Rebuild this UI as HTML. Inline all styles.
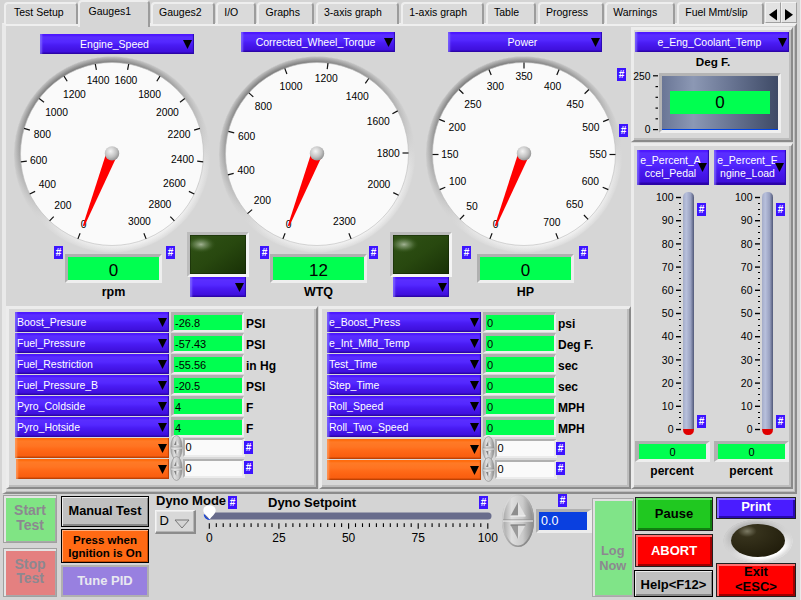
<!DOCTYPE html>
<html><head><meta charset="utf-8"><title>Dyno</title>
<style>
html,body{margin:0;padding:0}
body{width:801px;height:600px;background:#d4d4d4;position:relative;overflow:hidden;font-family:"Liberation Sans",sans-serif;font-size:11px;color:#000}
div,svg.abs{position:absolute;box-sizing:border-box}
.abs{position:absolute}
.tab{background:#dadada;border:2px solid #eeeeee;border-bottom:none;border-right:2px solid #9c9c9c;border-radius:4px 4px 0 0;text-align:left;padding-left:7.5px;font-size:10.5px;white-space:nowrap;overflow:hidden}
.panel{background:#d8d8d8;border-style:solid;border-width:3px 2px 2px 3px;border-color:#ececec #8a8a8a #8a8a8a #ececec;box-shadow:inset -2px -2px 0 #bdbdbd}
.dd{color:#fff;font-size:10.5px;white-space:nowrap;overflow:hidden}
.dd.blue{background:linear-gradient(#4a14ff 0,#4a14ff 1px,#5a2eff 3px,#5428ff 40%,#4a1cf4 55%,#4414e6 75%,#3e10dc 90%,#2a02a8 96%,#2800a0 100%);box-shadow:inset 3px 0 2px -1px rgba(135,115,255,.75), inset -2px 0 1px -1px #2a0ab0}
.dd.orange{background:linear-gradient(#ff6a0a 0,#ff6a0a 1px,#ff7a26 3px,#ff7422 40%,#ff6a18 55%,#fc6212 75%,#f85e10 90%,#c04000 96%,#b43a00 100%);box-shadow:inset 3px 0 2px -1px rgba(255,160,100,.75), inset -2px 0 1px -1px #c04000}
.arr{position:absolute}
.hb{width:9px;height:13px;background:#3c14ff;color:#fff;font-size:10px;line-height:13px;text-align:center;font-weight:bold;overflow:hidden}
.sunk{border-style:solid;border-color:#b0b0b0 #eeeeee #eeeeee #b0b0b0;background:#00ff50;white-space:nowrap}
.lb{white-space:nowrap;line-height:1}
.gl{font-family:"Liberation Sans",sans-serif;font-size:10.3px;fill:#000}
.tl{font-family:"Liberation Sans",sans-serif;font-size:10.5px;fill:#000}
.btn{text-align:center;font-weight:bold;font-size:13px;white-space:nowrap}
</style></head><body>
<svg width="0" height="0" style="position:absolute"><defs>
<linearGradient id="bezel" x1="0.3" y1="0.03" x2="0.7" y2="0.97"><stop offset="0" stop-color="#646464"/><stop offset="0.45" stop-color="#b4b4b4"/><stop offset="0.75" stop-color="#e6e6e6"/><stop offset="1" stop-color="#f6f6f6"/></linearGradient>
<radialGradient id="fade" cx="0.5" cy="0.5" r="0.5"><stop offset="0.925" stop-color="#d6d6d6" stop-opacity="0"/><stop offset="1" stop-color="#d6d6d6" stop-opacity="0.9"/></radialGradient>
<radialGradient id="hub" cx="0.4" cy="0.35" r="0.7"><stop offset="0" stop-color="#f4f4f4"/><stop offset="0.6" stop-color="#c0c0c0"/><stop offset="1" stop-color="#8a8a8a"/></radialGradient>
<linearGradient id="tube" x1="0" y1="0" x2="1" y2="0"><stop offset="0" stop-color="#a4acc8"/><stop offset="0.3" stop-color="#b8c0dc"/><stop offset="0.7" stop-color="#98a0c0"/><stop offset="1" stop-color="#505878"/></linearGradient>
<linearGradient id="spin" x1="0" y1="0" x2="1" y2="0"><stop offset="0" stop-color="#a2a2a2"/><stop offset="0.3" stop-color="#dedede"/><stop offset="0.65" stop-color="#cacaca"/><stop offset="1" stop-color="#868686"/></linearGradient><linearGradient id="spinedge" x1="0" y1="0" x2="1" y2="1"><stop offset="0" stop-color="#e8e8e8"/><stop offset="0.5" stop-color="#b0b0b0"/><stop offset="1" stop-color="#7a7a7a"/></linearGradient>
<radialGradient id="led" cx="0.3" cy="0.22" r="0.8"><stop offset="0" stop-color="#7c7a64"/><stop offset="0.22" stop-color="#36321c"/><stop offset="1" stop-color="#221e0c"/></radialGradient><linearGradient id="ledring" x1="0.2" y1="0" x2="0.8" y2="1"><stop offset="0" stop-color="#a4a4a4"/><stop offset="0.5" stop-color="#d0d0d0"/><stop offset="0.8" stop-color="#ffffff"/><stop offset="1" stop-color="#ffffff"/></linearGradient><radialGradient id="ledfade" cx="0.5" cy="0.5" r="0.5"><stop offset="0.8" stop-color="#d4d4d4" stop-opacity="0"/><stop offset="1" stop-color="#d4d4d4" stop-opacity="0.95"/></radialGradient>
<linearGradient id="sqled" x1="0" y1="0" x2="1" y2="1"><stop offset="0" stop-color="#305216"/><stop offset="0.5" stop-color="#28480f"/><stop offset="1" stop-color="#183006"/></linearGradient><radialGradient id="sqhl" cx="0.5" cy="0.5" r="0.5"><stop offset="0" stop-color="#c0ccb4" stop-opacity="0.8"/><stop offset="0.5" stop-color="#90a880" stop-opacity="0.4"/><stop offset="1" stop-color="#305216" stop-opacity="0"/></radialGradient>
</defs></svg>

<div style="left:2px;top:23px;width:795px;height:470.5px;background:#d6d6d6;border-style:solid;border-width:3px 2px 2px 4px;border-color:#efefef #8c8c8c #8c8c8c #e9e9e9;box-shadow:inset -1px -1px 0 #bcbcbc"></div><div style="left:800px;top:0;width:1px;height:600px;background:#eaeaea"></div>
<div class="tab" style="left:4px;top:2px;width:73.5px;height:22px;line-height:17.6px;padding-left:8px">Test Setup</div>
<div class="tab" style="left:78px;top:0;width:71.5px;height:27px;line-height:18.4px;background:#d6d6d6;padding-left:8.5px">Gauges1</div>
<div class="tab" style="left:150.5px;top:2px;width:64.0px;height:22px;line-height:17.6px;padding-left:6.5px">Gauges2</div>
<div class="tab" style="left:215.75px;top:2px;width:39.75px;height:22px;line-height:17.6px;padding-left:6.5px">I/O</div>
<div class="tab" style="left:257px;top:2px;width:57px;height:22px;line-height:17.6px;padding-left:6.5px">Graphs</div>
<div class="tab" style="left:315.5px;top:2px;width:83.75px;height:22px;line-height:17.6px;padding-left:6.5px">3-axis graph</div>
<div class="tab" style="left:400.75px;top:2px;width:83.5px;height:22px;line-height:17.6px;padding-left:6.5px">1-axis graph</div>
<div class="tab" style="left:485.5px;top:2px;width:50.75px;height:22px;line-height:17.6px;padding-left:6.5px">Table</div>
<div class="tab" style="left:537.5px;top:2px;width:66.75px;height:22px;line-height:17.6px;padding-left:6.5px">Progress</div>
<div class="tab" style="left:604.75px;top:2px;width:70.5px;height:22px;line-height:17.6px;padding-left:6.5px">Warnings</div>
<div class="tab" style="left:676.75px;top:2px;width:86.75px;height:22px;line-height:17.6px;padding-left:6.5px">Fuel Mmt/slip</div>
<div style="left:765px;top:2px;width:16px;height:21px;background:#e2e2e2;border:1px solid;border-color:#f2f2f2 #a0a0a0 #a0a0a0 #f2f2f2"><svg class="abs" style="left:3px;top:6px" width="8" height="12"><path d="M8 0V11.5L0 5.7Z"/></svg></div>
<div style="left:781px;top:2px;width:16px;height:21px;background:#e2e2e2;border:1px solid;border-color:#f2f2f2 #a0a0a0 #a0a0a0 #f2f2f2"><svg class="abs" style="left:3px;top:6px" width="8" height="12"><path d="M0 0V11.5L8 5.7Z"/></svg></div>
<div class="dd blue" style="left:40px;top:34px;width:154px;height:20px;text-align:center;padding-right:5px;line-height:20.5px;">Engine_Speed<svg class="arr" style="left:143px;top:6.0px" width="9" height="9" viewBox="0 0 9 9"><path d="M0 0H9L4.5 9Z" fill="#000"/></svg></div>
<div class="dd blue" style="left:241px;top:32px;width:154px;height:20px;text-align:center;padding-right:5px;line-height:20.5px;">Corrected_Wheel_Torque<svg class="arr" style="left:143px;top:6.0px" width="9" height="9" viewBox="0 0 9 9"><path d="M0 0H9L4.5 9Z" fill="#000"/></svg></div>
<div class="dd blue" style="left:448px;top:32px;width:154px;height:20px;text-align:center;padding-right:5px;line-height:20.5px;">Power<svg class="arr" style="left:143px;top:6.0px" width="9" height="9" viewBox="0 0 9 9"><path d="M0 0H9L4.5 9Z" fill="#000"/></svg></div>
<svg class="abs" style="left:12px;top:53.900000000000006px" width="200" height="200" viewBox="12 53.900000000000006 200 200"><circle cx="112" cy="154.4" r="98" fill="url(#bezel)"/><circle cx="112" cy="154.4" r="98.5" fill="url(#fade)"/><circle cx="112" cy="153.9" r="91.5" fill="#fafafa" stroke="#bebebe" stroke-opacity="0.7" stroke-width="0.9"/><line x1="77.9" y1="238.8" x2="80.1" y2="233.2" stroke="#111" stroke-width="1.2"/><text x="83.6" y="227.7" text-anchor="middle" class="gl">0</text><line x1="49.6" y1="220.8" x2="53.7" y2="216.5" stroke="#111" stroke-width="1.2"/><text x="62.8" y="209.4" text-anchor="middle" class="gl">200</text><line x1="29.7" y1="193.9" x2="35.1" y2="191.3" stroke="#111" stroke-width="1.2"/><text x="47.3" y="188.4" text-anchor="middle" class="gl">400</text><line x1="20.8" y1="161.7" x2="26.8" y2="161.1" stroke="#111" stroke-width="1.2"/><text x="38.7" y="163.6" text-anchor="middle" class="gl">600</text><line x1="24.1" y1="128.3" x2="29.9" y2="130.0" stroke="#111" stroke-width="1.2"/><text x="42.3" y="137.6" text-anchor="middle" class="gl">800</text><line x1="39.2" y1="98.5" x2="44.0" y2="102.1" stroke="#111" stroke-width="1.2"/><text x="56.6" y="116.1" text-anchor="middle" class="gl">1000</text><line x1="64.0" y1="76.0" x2="67.2" y2="81.1" stroke="#111" stroke-width="1.2"/><text x="74.4" y="97.5" text-anchor="middle" class="gl">1200</text><line x1="95.3" y1="63.9" x2="96.4" y2="69.8" stroke="#111" stroke-width="1.2"/><text x="98.1" y="83.9" text-anchor="middle" class="gl">1400</text><line x1="128.7" y1="63.9" x2="127.6" y2="69.8" stroke="#111" stroke-width="1.2"/><text x="125.9" y="83.9" text-anchor="middle" class="gl">1600</text><line x1="160.0" y1="76.0" x2="156.8" y2="81.1" stroke="#111" stroke-width="1.2"/><text x="149.6" y="97.5" text-anchor="middle" class="gl">1800</text><line x1="184.8" y1="98.5" x2="180.0" y2="102.1" stroke="#111" stroke-width="1.2"/><text x="167.4" y="116.1" text-anchor="middle" class="gl">2000</text><line x1="199.9" y1="128.3" x2="194.1" y2="130.0" stroke="#111" stroke-width="1.2"/><text x="179.0" y="138.4" text-anchor="middle" class="gl">2200</text><line x1="203.2" y1="161.7" x2="197.2" y2="161.1" stroke="#111" stroke-width="1.2"/><text x="182.5" y="163.4" text-anchor="middle" class="gl">2400</text><line x1="194.3" y1="193.9" x2="188.9" y2="191.3" stroke="#111" stroke-width="1.2"/><text x="174.4" y="187.3" text-anchor="middle" class="gl">2600</text><line x1="174.4" y1="220.8" x2="170.3" y2="216.5" stroke="#111" stroke-width="1.2"/><text x="159.9" y="208.0" text-anchor="middle" class="gl">2800</text><line x1="146.1" y1="238.8" x2="143.9" y2="233.2" stroke="#111" stroke-width="1.2"/><text x="139.4" y="224.6" text-anchor="middle" class="gl">3000</text><polygon points="106.8,151.3 82.8,225.6 84.3,226.2 117.2,155.3" fill="#ff0000"/><circle cx="112" cy="153.3" r="7.2" fill="url(#hub)"/></svg>
<svg class="abs" style="left:217px;top:53.900000000000006px" width="200" height="200" viewBox="217 53.900000000000006 200 200"><circle cx="317" cy="154.4" r="98" fill="url(#bezel)"/><circle cx="317" cy="154.4" r="98.5" fill="url(#fade)"/><circle cx="317" cy="153.9" r="91.5" fill="#fafafa" stroke="#bebebe" stroke-opacity="0.7" stroke-width="0.9"/><line x1="282.9" y1="238.8" x2="285.1" y2="233.2" stroke="#111" stroke-width="1.2"/><text x="288.6" y="227.7" text-anchor="middle" class="gl">0</text><line x1="247.5" y1="213.5" x2="252.1" y2="209.5" stroke="#111" stroke-width="1.2"/><text x="262.4" y="203.5" text-anchor="middle" class="gl">200</text><line x1="227.9" y1="174.7" x2="233.7" y2="173.3" stroke="#111" stroke-width="1.2"/><text x="246.1" y="173.7" text-anchor="middle" class="gl">400</text><line x1="228.4" y1="131.2" x2="234.2" y2="132.7" stroke="#111" stroke-width="1.2"/><text x="246.6" y="139.8" text-anchor="middle" class="gl">600</text><line x1="248.9" y1="92.8" x2="253.3" y2="96.8" stroke="#111" stroke-width="1.2"/><text x="263.4" y="110.3" text-anchor="middle" class="gl">800</text><line x1="284.8" y1="68.3" x2="286.9" y2="73.9" stroke="#111" stroke-width="1.2"/><text x="291.0" y="89.6" text-anchor="middle" class="gl">1000</text><line x1="328.0" y1="63.1" x2="327.2" y2="69.0" stroke="#111" stroke-width="1.2"/><text x="326.2" y="82.3" text-anchor="middle" class="gl">1200</text><line x1="368.7" y1="78.4" x2="365.3" y2="83.3" stroke="#111" stroke-width="1.2"/><text x="357.3" y="99.7" text-anchor="middle" class="gl">1400</text><line x1="397.7" y1="110.8" x2="392.4" y2="113.6" stroke="#111" stroke-width="1.2"/><text x="378.2" y="125.4" text-anchor="middle" class="gl">1600</text><line x1="408.5" y1="152.9" x2="402.5" y2="152.9" stroke="#111" stroke-width="1.2"/><text x="388.2" y="156.7" text-anchor="middle" class="gl">1800</text><line x1="398.6" y1="195.2" x2="393.3" y2="192.5" stroke="#111" stroke-width="1.2"/><text x="378.9" y="188.3" text-anchor="middle" class="gl">2000</text><line x1="351.1" y1="238.8" x2="348.9" y2="233.2" stroke="#111" stroke-width="1.2"/><text x="344.4" y="224.6" text-anchor="middle" class="gl">2300</text><polygon points="311.8,151.3 287.8,225.6 289.3,226.2 322.2,155.3" fill="#ff0000"/><circle cx="317" cy="153.3" r="7.2" fill="url(#hub)"/></svg>
<svg class="abs" style="left:424px;top:53.900000000000006px" width="200" height="200" viewBox="424 53.900000000000006 200 200"><circle cx="524" cy="154.4" r="98" fill="url(#bezel)"/><circle cx="524" cy="154.4" r="98.5" fill="url(#fade)"/><circle cx="524" cy="153.9" r="91.5" fill="#fafafa" stroke="#bebebe" stroke-opacity="0.7" stroke-width="0.9"/><line x1="489.9" y1="238.8" x2="492.1" y2="233.2" stroke="#111" stroke-width="1.2"/><text x="495.6" y="227.7" text-anchor="middle" class="gl">0</text><line x1="459.9" y1="219.2" x2="464.1" y2="214.9" stroke="#111" stroke-width="1.2"/><text x="472.0" y="209.5" text-anchor="middle" class="gl">50</text><line x1="439.7" y1="189.5" x2="445.3" y2="187.2" stroke="#111" stroke-width="1.2"/><text x="457.6" y="185.1" text-anchor="middle" class="gl">100</text><line x1="432.5" y1="154.4" x2="438.5" y2="154.4" stroke="#111" stroke-width="1.2"/><text x="449.9" y="157.9" text-anchor="middle" class="gl">150</text><line x1="439.3" y1="119.3" x2="444.9" y2="121.5" stroke="#111" stroke-width="1.2"/><text x="457.2" y="130.7" text-anchor="middle" class="gl">200</text><line x1="459.1" y1="89.4" x2="463.4" y2="93.6" stroke="#111" stroke-width="1.2"/><text x="472.9" y="107.6" text-anchor="middle" class="gl">250</text><line x1="488.9" y1="69.4" x2="491.2" y2="75.0" stroke="#111" stroke-width="1.2"/><text x="495.4" y="89.9" text-anchor="middle" class="gl">300</text><line x1="524.0" y1="62.4" x2="524.0" y2="68.4" stroke="#111" stroke-width="1.2"/><text x="524.0" y="80.0" text-anchor="middle" class="gl">350</text><line x1="559.1" y1="69.4" x2="556.8" y2="75.0" stroke="#111" stroke-width="1.2"/><text x="552.6" y="89.9" text-anchor="middle" class="gl">400</text><line x1="588.9" y1="89.4" x2="584.6" y2="93.6" stroke="#111" stroke-width="1.2"/><text x="575.1" y="107.6" text-anchor="middle" class="gl">450</text><line x1="608.7" y1="119.3" x2="603.1" y2="121.5" stroke="#111" stroke-width="1.2"/><text x="590.8" y="130.7" text-anchor="middle" class="gl">500</text><line x1="615.5" y1="154.4" x2="609.5" y2="154.4" stroke="#111" stroke-width="1.2"/><text x="598.1" y="157.9" text-anchor="middle" class="gl">550</text><line x1="608.3" y1="189.5" x2="602.7" y2="187.2" stroke="#111" stroke-width="1.2"/><text x="590.4" y="185.1" text-anchor="middle" class="gl">600</text><line x1="588.1" y1="219.2" x2="583.9" y2="214.9" stroke="#111" stroke-width="1.2"/><text x="574.6" y="208.0" text-anchor="middle" class="gl">650</text><line x1="558.1" y1="238.8" x2="555.9" y2="233.2" stroke="#111" stroke-width="1.2"/><text x="551.8" y="225.6" text-anchor="middle" class="gl">700</text><polygon points="518.8,151.3 494.8,225.6 496.3,226.2 529.2,155.3" fill="#ff0000"/><circle cx="524" cy="153.3" r="7.2" fill="url(#hub)"/></svg>
<div class="hb" style="left:54px;top:246px">#</div>
<div class="hb" style="left:166px;top:246px">#</div>
<div class="sunk" style="left:65px;top:254px;width:97px;height:29px;border-width:3px 3px 3px 3px;font-size:17px;line-height:23px;text-align:center;padding-top:1.5px;">0</div>
<div class="lb" style="left:73.5px;top:286.3px;font-size:12.5px;color:#000;font-weight:bold;width:80px;text-align:center;">rpm</div>
<div class="hb" style="left:260px;top:246px">#</div>
<div class="hb" style="left:369px;top:246px">#</div>
<div class="sunk" style="left:270px;top:254px;width:97px;height:29px;border-width:3px 3px 3px 3px;font-size:17px;line-height:23px;text-align:center;padding-top:1.5px;">12</div>
<div class="lb" style="left:278.5px;top:286.3px;font-size:12.5px;color:#000;font-weight:bold;width:80px;text-align:center;">WTQ</div>
<div class="hb" style="left:462px;top:246px">#</div>
<div class="hb" style="left:579px;top:246px">#</div>
<div class="sunk" style="left:477px;top:254px;width:97px;height:29px;border-width:3px 3px 3px 3px;font-size:17px;line-height:23px;text-align:center;padding-top:1.5px;">0</div>
<div class="lb" style="left:485.5px;top:286.3px;font-size:12.5px;color:#000;font-weight:bold;width:80px;text-align:center;">HP</div>
<div style="left:187px;top:232px;width:62px;height:45px;border-style:solid;border-width:3px 3px 3px 3px;border-color:#bcbcbc #f4f4f4 #f4f4f4 #bcbcbc"><svg class="abs" style="left:0;top:0" width="56" height="39" viewBox="0 0 56 39"><rect width="56" height="39" fill="url(#sqled)"/><rect width="56" height="39" fill="none" stroke="#0c1c04" stroke-opacity="0.55" stroke-width="1.5"/><ellipse cx="11" cy="9.5" rx="15" ry="8.5" fill="url(#sqhl)"/></svg></div>
<div class="dd blue" style="left:190px;top:277px;width:56px;height:20px;text-align:center;padding-right:5px;line-height:20.5px;"><svg class="arr" style="left:45px;top:6.0px" width="9" height="9" viewBox="0 0 9 9"><path d="M0 0H9L4.5 9Z" fill="#000"/></svg></div>
<div style="left:390px;top:232px;width:62px;height:45px;border-style:solid;border-width:3px 3px 3px 3px;border-color:#bcbcbc #f4f4f4 #f4f4f4 #bcbcbc"><svg class="abs" style="left:0;top:0" width="56" height="39" viewBox="0 0 56 39"><rect width="56" height="39" fill="url(#sqled)"/><rect width="56" height="39" fill="none" stroke="#0c1c04" stroke-opacity="0.55" stroke-width="1.5"/><ellipse cx="11" cy="9.5" rx="15" ry="8.5" fill="url(#sqhl)"/></svg></div>
<div class="dd blue" style="left:393px;top:277px;width:56px;height:20px;text-align:center;padding-right:5px;line-height:20.5px;"><svg class="arr" style="left:45px;top:6.0px" width="9" height="9" viewBox="0 0 9 9"><path d="M0 0H9L4.5 9Z" fill="#000"/></svg></div>
<div class="panel" style="left:6px;top:306px;width:312px;height:183px"></div>
<div class="dd blue" style="left:15px;top:312px;width:154px;height:20px;text-align:left;padding-left:2px;line-height:20.5px;">Boost_Presure<svg class="arr" style="left:143px;top:6.0px" width="9" height="9" viewBox="0 0 9 9"><path d="M0 0H9L4.5 9Z" fill="#000"/></svg></div>
<div class="sunk" style="left:171px;top:312px;width:73px;height:20px;border-width:3px 2px 2px 3px;font-size:11px;line-height:15px;text-align:left;padding-left:1px;padding-top:0.8px;">-26.8</div>
<div class="lb" style="left:246px;top:318px;font-size:12px;color:#000;font-weight:bold;">PSI</div>
<div class="dd blue" style="left:15px;top:333px;width:154px;height:20px;text-align:left;padding-left:2px;line-height:20.5px;">Fuel_Pressure<svg class="arr" style="left:143px;top:6.0px" width="9" height="9" viewBox="0 0 9 9"><path d="M0 0H9L4.5 9Z" fill="#000"/></svg></div>
<div class="sunk" style="left:171px;top:333px;width:73px;height:20px;border-width:3px 2px 2px 3px;font-size:11px;line-height:15px;text-align:left;padding-left:1px;padding-top:0.8px;">-57.43</div>
<div class="lb" style="left:246px;top:339px;font-size:12px;color:#000;font-weight:bold;">PSI</div>
<div class="dd blue" style="left:15px;top:354px;width:154px;height:20px;text-align:left;padding-left:2px;line-height:20.5px;">Fuel_Restriction<svg class="arr" style="left:143px;top:6.0px" width="9" height="9" viewBox="0 0 9 9"><path d="M0 0H9L4.5 9Z" fill="#000"/></svg></div>
<div class="sunk" style="left:171px;top:354px;width:73px;height:20px;border-width:3px 2px 2px 3px;font-size:11px;line-height:15px;text-align:left;padding-left:1px;padding-top:0.8px;">-55.56</div>
<div class="lb" style="left:246px;top:360px;font-size:12px;color:#000;font-weight:bold;">in Hg</div>
<div class="dd blue" style="left:15px;top:375px;width:154px;height:20px;text-align:left;padding-left:2px;line-height:20.5px;">Fuel_Pressure_B<svg class="arr" style="left:143px;top:6.0px" width="9" height="9" viewBox="0 0 9 9"><path d="M0 0H9L4.5 9Z" fill="#000"/></svg></div>
<div class="sunk" style="left:171px;top:375px;width:73px;height:20px;border-width:3px 2px 2px 3px;font-size:11px;line-height:15px;text-align:left;padding-left:1px;padding-top:0.8px;">-20.5</div>
<div class="lb" style="left:246px;top:381px;font-size:12px;color:#000;font-weight:bold;">PSI</div>
<div class="dd blue" style="left:15px;top:396px;width:154px;height:20px;text-align:left;padding-left:2px;line-height:20.5px;">Pyro_Coldside<svg class="arr" style="left:143px;top:6.0px" width="9" height="9" viewBox="0 0 9 9"><path d="M0 0H9L4.5 9Z" fill="#000"/></svg></div>
<div class="sunk" style="left:171px;top:396px;width:73px;height:20px;border-width:3px 2px 2px 3px;font-size:11px;line-height:15px;text-align:left;padding-left:1px;padding-top:0.8px;">4</div>
<div class="lb" style="left:246px;top:402px;font-size:12px;color:#000;font-weight:bold;">F</div>
<div class="dd blue" style="left:15px;top:417px;width:154px;height:20px;text-align:left;padding-left:2px;line-height:20.5px;">Pyro_Hotside<svg class="arr" style="left:143px;top:6.0px" width="9" height="9" viewBox="0 0 9 9"><path d="M0 0H9L4.5 9Z" fill="#000"/></svg></div>
<div class="sunk" style="left:171px;top:417px;width:73px;height:20px;border-width:3px 2px 2px 3px;font-size:11px;line-height:15px;text-align:left;padding-left:1px;padding-top:0.8px;">4</div>
<div class="lb" style="left:246px;top:423px;font-size:12px;color:#000;font-weight:bold;">F</div>
<div class="dd orange" style="left:15px;top:438px;width:154px;height:20px;text-align:center;padding-right:5px;line-height:20.5px;"><svg class="arr" style="left:143px;top:6.0px" width="9" height="9" viewBox="0 0 9 9"><path d="M0 0H9L4.5 9Z" fill="#000"/></svg></div>
<svg class="abs" style="left:170px;top:435px" width="13" height="25" viewBox="0 0 13 25"><ellipse cx="6.5" cy="12.5" rx="5.7" ry="12" fill="url(#spin)" stroke="#9c9c9c" stroke-width="0.8"/><line x1="1" y1="12.2" x2="12" y2="12.2" stroke="#8a8a8a" stroke-width="0.8"/><line x1="1" y1="13" x2="12" y2="13" stroke="#f0f0f0" stroke-width="0.8"/><path d="M6.5 4.5L4 10H6.5Z M6.5 20.5L4 15H6.5Z" fill="#808080"/><path d="M6.5 4.5L9 10H6.5Z M6.5 20.5L9 15H6.5Z" fill="#e4e4e4"/></svg>
<div style="left:182.5px;top:438px;width:62px;height:19px;background:#fafafa;border-style:solid;border-width:2px 3.5px 2.3px 2.3px;border-color:#b0b0b0 #ececec #ececec #b0b0b0;line-height:15px;padding-left:1px;font-size:11px">0</div>
<div class="hb" style="left:244px;top:441px">#</div>
<div class="dd orange" style="left:16px;top:459px;width:153px;height:20px;text-align:center;padding-right:5px;line-height:20.5px;"><svg class="arr" style="left:142px;top:6.0px" width="9" height="9" viewBox="0 0 9 9"><path d="M0 0H9L4.5 9Z" fill="#000"/></svg></div>
<svg class="abs" style="left:170px;top:456px" width="13" height="25" viewBox="0 0 13 25"><ellipse cx="6.5" cy="12.5" rx="5.7" ry="12" fill="url(#spin)" stroke="#9c9c9c" stroke-width="0.8"/><line x1="1" y1="12.2" x2="12" y2="12.2" stroke="#8a8a8a" stroke-width="0.8"/><line x1="1" y1="13" x2="12" y2="13" stroke="#f0f0f0" stroke-width="0.8"/><path d="M6.5 4.5L4 10H6.5Z M6.5 20.5L4 15H6.5Z" fill="#808080"/><path d="M6.5 4.5L9 10H6.5Z M6.5 20.5L9 15H6.5Z" fill="#e4e4e4"/></svg>
<div style="left:182.5px;top:459px;width:62px;height:19px;background:#fafafa;border-style:solid;border-width:2px 3.5px 2.3px 2.3px;border-color:#b0b0b0 #ececec #ececec #b0b0b0;line-height:15px;padding-left:1px;font-size:11px">0</div>
<div class="hb" style="left:244px;top:461px">#</div>
<div class="panel" style="left:319px;top:306px;width:312px;height:183px"></div>
<div class="dd blue" style="left:327px;top:312px;width:154px;height:20px;text-align:left;padding-left:2px;line-height:20.5px;">e_Boost_Press<svg class="arr" style="left:143px;top:6.0px" width="9" height="9" viewBox="0 0 9 9"><path d="M0 0H9L4.5 9Z" fill="#000"/></svg></div>
<div class="sunk" style="left:483px;top:312px;width:73px;height:20px;border-width:3px 2px 2px 3px;font-size:11px;line-height:15px;text-align:left;padding-left:1px;padding-top:0.8px;">0</div>
<div class="lb" style="left:558px;top:318px;font-size:12px;color:#000;font-weight:bold;">psi</div>
<div class="dd blue" style="left:327px;top:333px;width:154px;height:20px;text-align:left;padding-left:2px;line-height:20.5px;">e_Int_Mfld_Temp<svg class="arr" style="left:143px;top:6.0px" width="9" height="9" viewBox="0 0 9 9"><path d="M0 0H9L4.5 9Z" fill="#000"/></svg></div>
<div class="sunk" style="left:483px;top:333px;width:73px;height:20px;border-width:3px 2px 2px 3px;font-size:11px;line-height:15px;text-align:left;padding-left:1px;padding-top:0.8px;">0</div>
<div class="lb" style="left:558px;top:339px;font-size:12px;color:#000;font-weight:bold;">Deg F.</div>
<div class="dd blue" style="left:327px;top:354px;width:154px;height:20px;text-align:left;padding-left:2px;line-height:20.5px;">Test_Time<svg class="arr" style="left:143px;top:6.0px" width="9" height="9" viewBox="0 0 9 9"><path d="M0 0H9L4.5 9Z" fill="#000"/></svg></div>
<div class="sunk" style="left:483px;top:354px;width:73px;height:20px;border-width:3px 2px 2px 3px;font-size:11px;line-height:15px;text-align:left;padding-left:1px;padding-top:0.8px;">0</div>
<div class="lb" style="left:558px;top:360px;font-size:12px;color:#000;font-weight:bold;">sec</div>
<div class="dd blue" style="left:327px;top:375px;width:154px;height:20px;text-align:left;padding-left:2px;line-height:20.5px;">Step_Time<svg class="arr" style="left:143px;top:6.0px" width="9" height="9" viewBox="0 0 9 9"><path d="M0 0H9L4.5 9Z" fill="#000"/></svg></div>
<div class="sunk" style="left:483px;top:375px;width:73px;height:20px;border-width:3px 2px 2px 3px;font-size:11px;line-height:15px;text-align:left;padding-left:1px;padding-top:0.8px;">0</div>
<div class="lb" style="left:558px;top:381px;font-size:12px;color:#000;font-weight:bold;">sec</div>
<div class="dd blue" style="left:327px;top:396px;width:154px;height:20px;text-align:left;padding-left:2px;line-height:20.5px;">Roll_Speed<svg class="arr" style="left:143px;top:6.0px" width="9" height="9" viewBox="0 0 9 9"><path d="M0 0H9L4.5 9Z" fill="#000"/></svg></div>
<div class="sunk" style="left:483px;top:396px;width:73px;height:20px;border-width:3px 2px 2px 3px;font-size:11px;line-height:15px;text-align:left;padding-left:1px;padding-top:0.8px;">0</div>
<div class="lb" style="left:558px;top:402px;font-size:12px;color:#000;font-weight:bold;">MPH</div>
<div class="dd blue" style="left:327px;top:417px;width:154px;height:20px;text-align:left;padding-left:2px;line-height:20.5px;">Roll_Two_Speed<svg class="arr" style="left:143px;top:6.0px" width="9" height="9" viewBox="0 0 9 9"><path d="M0 0H9L4.5 9Z" fill="#000"/></svg></div>
<div class="sunk" style="left:483px;top:417px;width:73px;height:20px;border-width:3px 2px 2px 3px;font-size:11px;line-height:15px;text-align:left;padding-left:1px;padding-top:0.8px;">0</div>
<div class="lb" style="left:558px;top:423px;font-size:12px;color:#000;font-weight:bold;">MPH</div>
<div class="dd orange" style="left:327px;top:439px;width:154px;height:20px;text-align:center;padding-right:5px;line-height:20.5px;"><svg class="arr" style="left:143px;top:6.0px" width="9" height="9" viewBox="0 0 9 9"><path d="M0 0H9L4.5 9Z" fill="#000"/></svg></div>
<svg class="abs" style="left:482px;top:436px" width="13" height="25" viewBox="0 0 13 25"><ellipse cx="6.5" cy="12.5" rx="5.7" ry="12" fill="url(#spin)" stroke="#9c9c9c" stroke-width="0.8"/><line x1="1" y1="12.2" x2="12" y2="12.2" stroke="#8a8a8a" stroke-width="0.8"/><line x1="1" y1="13" x2="12" y2="13" stroke="#f0f0f0" stroke-width="0.8"/><path d="M6.5 4.5L4 10H6.5Z M6.5 20.5L4 15H6.5Z" fill="#808080"/><path d="M6.5 4.5L9 10H6.5Z M6.5 20.5L9 15H6.5Z" fill="#e4e4e4"/></svg>
<div style="left:494.5px;top:439px;width:62px;height:19px;background:#fafafa;border-style:solid;border-width:2px 3.5px 2.3px 2.3px;border-color:#b0b0b0 #ececec #ececec #b0b0b0;line-height:15px;padding-left:1px;font-size:11px">0</div>
<div class="hb" style="left:556px;top:442px">#</div>
<div class="dd orange" style="left:327px;top:460px;width:154px;height:20px;text-align:center;padding-right:5px;line-height:20.5px;"><svg class="arr" style="left:143px;top:6.0px" width="9" height="9" viewBox="0 0 9 9"><path d="M0 0H9L4.5 9Z" fill="#000"/></svg></div>
<svg class="abs" style="left:482px;top:457px" width="13" height="25" viewBox="0 0 13 25"><ellipse cx="6.5" cy="12.5" rx="5.7" ry="12" fill="url(#spin)" stroke="#9c9c9c" stroke-width="0.8"/><line x1="1" y1="12.2" x2="12" y2="12.2" stroke="#8a8a8a" stroke-width="0.8"/><line x1="1" y1="13" x2="12" y2="13" stroke="#f0f0f0" stroke-width="0.8"/><path d="M6.5 4.5L4 10H6.5Z M6.5 20.5L4 15H6.5Z" fill="#808080"/><path d="M6.5 4.5L9 10H6.5Z M6.5 20.5L9 15H6.5Z" fill="#e4e4e4"/></svg>
<div style="left:494.5px;top:460px;width:62px;height:19px;background:#fafafa;border-style:solid;border-width:2px 3.5px 2.3px 2.3px;border-color:#b0b0b0 #ececec #ececec #b0b0b0;line-height:15px;padding-left:1px;font-size:11px">0</div>
<div class="hb" style="left:556px;top:462px">#</div>
<div class="panel" style="left:631px;top:27px;width:162px;height:115px"></div>
<div class="dd blue" style="left:635px;top:32px;width:154px;height:20px;text-align:center;padding-right:5px;line-height:20.5px;">e_Eng_Coolant_Temp<svg class="arr" style="left:143px;top:6.0px" width="9" height="9" viewBox="0 0 9 9"><path d="M0 0H9L4.5 9Z" fill="#000"/></svg></div>
<div class="lb" style="left:663px;top:56px;font-size:11.7px;color:#000;font-weight:bold;width:100px;text-align:center;">Deg F.</div>
<div class="hb" style="left:617px;top:68px">#</div>
<div class="hb" style="left:619px;top:124px">#</div>
<div style="left:659px;top:73px;width:122px;height:60px;border-style:solid;border-width:3px;border-color:#b4b4b4 #f0f0f0 #f0f0f0 #b4b4b4;background:linear-gradient(90deg,#6a7696 0,#8c98b4 27%,#687492 60%,#3e4a66 100%)"><div style="left:0;bottom:0;width:100%;height:1px;background:#0040e0"></div></div>
<div style="left:670px;top:91px;width:100px;height:23px;background:#00ff50;text-align:center;font-size:17px;line-height:23px">0</div>
<svg class="abs" style="left:630px;top:68px" width="30" height="70" viewBox="630 68 30 70"><line x1="653" y1="75.8" x2="658" y2="75.8" stroke="#000" stroke-width="1.2"/><line x1="655.5" y1="86.6" x2="658" y2="86.6" stroke="#000" stroke-width="1.2"/><line x1="655.5" y1="97.3" x2="658" y2="97.3" stroke="#000" stroke-width="1.2"/><line x1="655.5" y1="108.1" x2="658" y2="108.1" stroke="#000" stroke-width="1.2"/><line x1="655.5" y1="118.8" x2="658" y2="118.8" stroke="#000" stroke-width="1.2"/><line x1="653" y1="129.6" x2="658" y2="129.6" stroke="#000" stroke-width="1.2"/><text x="650.5" y="80" text-anchor="end" class="gl">250</text><text x="650.5" y="133" text-anchor="end" class="gl">0</text></svg>
<div class="panel" style="left:631px;top:143px;width:162px;height:346px"></div>
<div class="dd blue" style="left:637px;top:150px;width:72px;height:35px;text-align:center;padding-right:5px;line-height:13px;padding-top:4px;padding-right:5px;">e_Percent_A<br>ccel_Pedal<svg class="arr" style="left:61px;top:13px" width="9" height="9" viewBox="0 0 9 9"><path d="M0 0H9L4.5 9Z" fill="#000"/></svg></div>
<div class="dd blue" style="left:714px;top:150px;width:72px;height:35px;text-align:center;padding-right:5px;line-height:13px;padding-top:4px;padding-right:5px;">e_Percent_E<br>ngine_Load<svg class="arr" style="left:61px;top:13px" width="9" height="9" viewBox="0 0 9 9"><path d="M0 0H9L4.5 9Z" fill="#000"/></svg></div>
<svg class="abs" style="left:638px;top:186px" width="60" height="255" viewBox="638 186 60 255"><path d="M683 197.5 Q683 192 688.5 192 Q694 192 694 197.5 V430 H683Z" fill="url(#tube)"/><path d="M683 429 H694 Q694 435 688.5 435 Q683 435 683 429Z" fill="#e00000"/><line x1="676" y1="197.5" x2="681" y2="197.5" stroke="#000" stroke-width="1.4" shape-rendering="auto"/><text x="673.5" y="201.2" text-anchor="end" class="tl">100</text><line x1="678.5" y1="203.3" x2="681" y2="203.3" stroke="#000" stroke-width="1" shape-rendering="crispEdges"/><line x1="678.5" y1="209.1" x2="681" y2="209.1" stroke="#000" stroke-width="1" shape-rendering="crispEdges"/><line x1="678.5" y1="214.9" x2="681" y2="214.9" stroke="#000" stroke-width="1" shape-rendering="crispEdges"/><line x1="676" y1="220.7" x2="681" y2="220.7" stroke="#000" stroke-width="1.4" shape-rendering="auto"/><text x="673.5" y="224.4" text-anchor="end" class="tl">90</text><line x1="678.5" y1="226.5" x2="681" y2="226.5" stroke="#000" stroke-width="1" shape-rendering="crispEdges"/><line x1="678.5" y1="232.3" x2="681" y2="232.3" stroke="#000" stroke-width="1" shape-rendering="crispEdges"/><line x1="678.5" y1="238.1" x2="681" y2="238.1" stroke="#000" stroke-width="1" shape-rendering="crispEdges"/><line x1="676" y1="243.9" x2="681" y2="243.9" stroke="#000" stroke-width="1.4" shape-rendering="auto"/><text x="673.5" y="247.6" text-anchor="end" class="tl">80</text><line x1="678.5" y1="249.7" x2="681" y2="249.7" stroke="#000" stroke-width="1" shape-rendering="crispEdges"/><line x1="678.5" y1="255.5" x2="681" y2="255.5" stroke="#000" stroke-width="1" shape-rendering="crispEdges"/><line x1="678.5" y1="261.3" x2="681" y2="261.3" stroke="#000" stroke-width="1" shape-rendering="crispEdges"/><line x1="676" y1="267.1" x2="681" y2="267.1" stroke="#000" stroke-width="1.4" shape-rendering="auto"/><text x="673.5" y="270.8" text-anchor="end" class="tl">70</text><line x1="678.5" y1="272.9" x2="681" y2="272.9" stroke="#000" stroke-width="1" shape-rendering="crispEdges"/><line x1="678.5" y1="278.7" x2="681" y2="278.7" stroke="#000" stroke-width="1" shape-rendering="crispEdges"/><line x1="678.5" y1="284.5" x2="681" y2="284.5" stroke="#000" stroke-width="1" shape-rendering="crispEdges"/><line x1="676" y1="290.3" x2="681" y2="290.3" stroke="#000" stroke-width="1.4" shape-rendering="auto"/><text x="673.5" y="294.0" text-anchor="end" class="tl">60</text><line x1="678.5" y1="296.1" x2="681" y2="296.1" stroke="#000" stroke-width="1" shape-rendering="crispEdges"/><line x1="678.5" y1="301.9" x2="681" y2="301.9" stroke="#000" stroke-width="1" shape-rendering="crispEdges"/><line x1="678.5" y1="307.7" x2="681" y2="307.7" stroke="#000" stroke-width="1" shape-rendering="crispEdges"/><line x1="676" y1="313.5" x2="681" y2="313.5" stroke="#000" stroke-width="1.4" shape-rendering="auto"/><text x="673.5" y="317.2" text-anchor="end" class="tl">50</text><line x1="678.5" y1="319.3" x2="681" y2="319.3" stroke="#000" stroke-width="1" shape-rendering="crispEdges"/><line x1="678.5" y1="325.1" x2="681" y2="325.1" stroke="#000" stroke-width="1" shape-rendering="crispEdges"/><line x1="678.5" y1="330.9" x2="681" y2="330.9" stroke="#000" stroke-width="1" shape-rendering="crispEdges"/><line x1="676" y1="336.7" x2="681" y2="336.7" stroke="#000" stroke-width="1.4" shape-rendering="auto"/><text x="673.5" y="340.4" text-anchor="end" class="tl">40</text><line x1="678.5" y1="342.5" x2="681" y2="342.5" stroke="#000" stroke-width="1" shape-rendering="crispEdges"/><line x1="678.5" y1="348.3" x2="681" y2="348.3" stroke="#000" stroke-width="1" shape-rendering="crispEdges"/><line x1="678.5" y1="354.1" x2="681" y2="354.1" stroke="#000" stroke-width="1" shape-rendering="crispEdges"/><line x1="676" y1="359.9" x2="681" y2="359.9" stroke="#000" stroke-width="1.4" shape-rendering="auto"/><text x="673.5" y="363.6" text-anchor="end" class="tl">30</text><line x1="678.5" y1="365.7" x2="681" y2="365.7" stroke="#000" stroke-width="1" shape-rendering="crispEdges"/><line x1="678.5" y1="371.5" x2="681" y2="371.5" stroke="#000" stroke-width="1" shape-rendering="crispEdges"/><line x1="678.5" y1="377.3" x2="681" y2="377.3" stroke="#000" stroke-width="1" shape-rendering="crispEdges"/><line x1="676" y1="383.1" x2="681" y2="383.1" stroke="#000" stroke-width="1.4" shape-rendering="auto"/><text x="673.5" y="386.8" text-anchor="end" class="tl">20</text><line x1="678.5" y1="388.9" x2="681" y2="388.9" stroke="#000" stroke-width="1" shape-rendering="crispEdges"/><line x1="678.5" y1="394.7" x2="681" y2="394.7" stroke="#000" stroke-width="1" shape-rendering="crispEdges"/><line x1="678.5" y1="400.5" x2="681" y2="400.5" stroke="#000" stroke-width="1" shape-rendering="crispEdges"/><line x1="676" y1="406.3" x2="681" y2="406.3" stroke="#000" stroke-width="1.4" shape-rendering="auto"/><text x="673.5" y="410.0" text-anchor="end" class="tl">10</text><line x1="678.5" y1="412.1" x2="681" y2="412.1" stroke="#000" stroke-width="1" shape-rendering="crispEdges"/><line x1="678.5" y1="417.9" x2="681" y2="417.9" stroke="#000" stroke-width="1" shape-rendering="crispEdges"/><line x1="678.5" y1="423.7" x2="681" y2="423.7" stroke="#000" stroke-width="1" shape-rendering="crispEdges"/><line x1="676" y1="429.5" x2="681" y2="429.5" stroke="#000" stroke-width="1.4" shape-rendering="auto"/><text x="673.5" y="433.2" text-anchor="end" class="tl">0</text></svg>
<svg class="abs" style="left:717px;top:186px" width="60" height="255" viewBox="717 186 60 255"><path d="M762 197.5 Q762 192 767.5 192 Q773 192 773 197.5 V430 H762Z" fill="url(#tube)"/><path d="M762 429 H773 Q773 435 767.5 435 Q762 435 762 429Z" fill="#e00000"/><line x1="755" y1="197.5" x2="760" y2="197.5" stroke="#000" stroke-width="1.4" shape-rendering="auto"/><text x="752.5" y="201.2" text-anchor="end" class="tl">100</text><line x1="757.5" y1="203.3" x2="760" y2="203.3" stroke="#000" stroke-width="1" shape-rendering="crispEdges"/><line x1="757.5" y1="209.1" x2="760" y2="209.1" stroke="#000" stroke-width="1" shape-rendering="crispEdges"/><line x1="757.5" y1="214.9" x2="760" y2="214.9" stroke="#000" stroke-width="1" shape-rendering="crispEdges"/><line x1="755" y1="220.7" x2="760" y2="220.7" stroke="#000" stroke-width="1.4" shape-rendering="auto"/><text x="752.5" y="224.4" text-anchor="end" class="tl">90</text><line x1="757.5" y1="226.5" x2="760" y2="226.5" stroke="#000" stroke-width="1" shape-rendering="crispEdges"/><line x1="757.5" y1="232.3" x2="760" y2="232.3" stroke="#000" stroke-width="1" shape-rendering="crispEdges"/><line x1="757.5" y1="238.1" x2="760" y2="238.1" stroke="#000" stroke-width="1" shape-rendering="crispEdges"/><line x1="755" y1="243.9" x2="760" y2="243.9" stroke="#000" stroke-width="1.4" shape-rendering="auto"/><text x="752.5" y="247.6" text-anchor="end" class="tl">80</text><line x1="757.5" y1="249.7" x2="760" y2="249.7" stroke="#000" stroke-width="1" shape-rendering="crispEdges"/><line x1="757.5" y1="255.5" x2="760" y2="255.5" stroke="#000" stroke-width="1" shape-rendering="crispEdges"/><line x1="757.5" y1="261.3" x2="760" y2="261.3" stroke="#000" stroke-width="1" shape-rendering="crispEdges"/><line x1="755" y1="267.1" x2="760" y2="267.1" stroke="#000" stroke-width="1.4" shape-rendering="auto"/><text x="752.5" y="270.8" text-anchor="end" class="tl">70</text><line x1="757.5" y1="272.9" x2="760" y2="272.9" stroke="#000" stroke-width="1" shape-rendering="crispEdges"/><line x1="757.5" y1="278.7" x2="760" y2="278.7" stroke="#000" stroke-width="1" shape-rendering="crispEdges"/><line x1="757.5" y1="284.5" x2="760" y2="284.5" stroke="#000" stroke-width="1" shape-rendering="crispEdges"/><line x1="755" y1="290.3" x2="760" y2="290.3" stroke="#000" stroke-width="1.4" shape-rendering="auto"/><text x="752.5" y="294.0" text-anchor="end" class="tl">60</text><line x1="757.5" y1="296.1" x2="760" y2="296.1" stroke="#000" stroke-width="1" shape-rendering="crispEdges"/><line x1="757.5" y1="301.9" x2="760" y2="301.9" stroke="#000" stroke-width="1" shape-rendering="crispEdges"/><line x1="757.5" y1="307.7" x2="760" y2="307.7" stroke="#000" stroke-width="1" shape-rendering="crispEdges"/><line x1="755" y1="313.5" x2="760" y2="313.5" stroke="#000" stroke-width="1.4" shape-rendering="auto"/><text x="752.5" y="317.2" text-anchor="end" class="tl">50</text><line x1="757.5" y1="319.3" x2="760" y2="319.3" stroke="#000" stroke-width="1" shape-rendering="crispEdges"/><line x1="757.5" y1="325.1" x2="760" y2="325.1" stroke="#000" stroke-width="1" shape-rendering="crispEdges"/><line x1="757.5" y1="330.9" x2="760" y2="330.9" stroke="#000" stroke-width="1" shape-rendering="crispEdges"/><line x1="755" y1="336.7" x2="760" y2="336.7" stroke="#000" stroke-width="1.4" shape-rendering="auto"/><text x="752.5" y="340.4" text-anchor="end" class="tl">40</text><line x1="757.5" y1="342.5" x2="760" y2="342.5" stroke="#000" stroke-width="1" shape-rendering="crispEdges"/><line x1="757.5" y1="348.3" x2="760" y2="348.3" stroke="#000" stroke-width="1" shape-rendering="crispEdges"/><line x1="757.5" y1="354.1" x2="760" y2="354.1" stroke="#000" stroke-width="1" shape-rendering="crispEdges"/><line x1="755" y1="359.9" x2="760" y2="359.9" stroke="#000" stroke-width="1.4" shape-rendering="auto"/><text x="752.5" y="363.6" text-anchor="end" class="tl">30</text><line x1="757.5" y1="365.7" x2="760" y2="365.7" stroke="#000" stroke-width="1" shape-rendering="crispEdges"/><line x1="757.5" y1="371.5" x2="760" y2="371.5" stroke="#000" stroke-width="1" shape-rendering="crispEdges"/><line x1="757.5" y1="377.3" x2="760" y2="377.3" stroke="#000" stroke-width="1" shape-rendering="crispEdges"/><line x1="755" y1="383.1" x2="760" y2="383.1" stroke="#000" stroke-width="1.4" shape-rendering="auto"/><text x="752.5" y="386.8" text-anchor="end" class="tl">20</text><line x1="757.5" y1="388.9" x2="760" y2="388.9" stroke="#000" stroke-width="1" shape-rendering="crispEdges"/><line x1="757.5" y1="394.7" x2="760" y2="394.7" stroke="#000" stroke-width="1" shape-rendering="crispEdges"/><line x1="757.5" y1="400.5" x2="760" y2="400.5" stroke="#000" stroke-width="1" shape-rendering="crispEdges"/><line x1="755" y1="406.3" x2="760" y2="406.3" stroke="#000" stroke-width="1.4" shape-rendering="auto"/><text x="752.5" y="410.0" text-anchor="end" class="tl">10</text><line x1="757.5" y1="412.1" x2="760" y2="412.1" stroke="#000" stroke-width="1" shape-rendering="crispEdges"/><line x1="757.5" y1="417.9" x2="760" y2="417.9" stroke="#000" stroke-width="1" shape-rendering="crispEdges"/><line x1="757.5" y1="423.7" x2="760" y2="423.7" stroke="#000" stroke-width="1" shape-rendering="crispEdges"/><line x1="755" y1="429.5" x2="760" y2="429.5" stroke="#000" stroke-width="1.4" shape-rendering="auto"/><text x="752.5" y="433.2" text-anchor="end" class="tl">0</text></svg>
<div class="hb" style="left:697px;top:203px">#</div>
<div class="hb" style="left:776px;top:203px">#</div>
<div class="hb" style="left:697px;top:415px">#</div>
<div class="hb" style="left:776px;top:415px">#</div>
<div class="sunk" style="left:635px;top:441px;width:75px;height:21px;border-width:3px 4px 3px 4px;font-size:11px;line-height:15px;text-align:center;padding-top:1px;">0</div>
<div class="sunk" style="left:714px;top:441px;width:75px;height:21px;border-width:3px 4px 3px 4px;font-size:11px;line-height:15px;text-align:center;padding-top:1px;">0</div>
<div class="lb" style="left:632px;top:465px;font-size:12px;color:#000;font-weight:bold;width:80px;text-align:center;">percent</div>
<div class="lb" style="left:711px;top:465px;font-size:12px;color:#000;font-weight:bold;width:80px;text-align:center;">percent</div>
<div class="btn" style="left:3px;top:495px;width:54px;height:47.5px;background:#80e484;color:#8c8890;border:1px solid #a0a0a0;font-size:14px;line-height:14.5px;padding-top:7px;box-shadow:inset 2px 2px 0 #e4e4e4, inset -1px -1px 0 #a8a8a8;">Start<br>Test</div>
<div class="btn" style="left:3px;top:547.5px;width:54px;height:49px;background:#e48080;color:#8c8890;border:1px solid #a0a0a0;font-size:14px;line-height:14.5px;padding-top:8px;box-shadow:inset 2px 2px 0 #e4e4e4, inset -1px -1px 0 #a8a8a8;">Stop<br>Test</div>
<div class="btn" style="left:61px;top:496px;width:88px;height:31px;background:#c0c0c0;color:#000;border:1px solid #000;font-size:12.8px;line-height:28px;box-shadow:inset 1px 1px 0 #ececec, inset -1px -2px 0 #888;">Manual Test</div>
<div class="btn" style="left:61px;top:529px;width:88px;height:34px;background:#ff6a14;color:#000;border:1px solid #000;font-size:11.5px;line-height:13px;padding-top:3.7px;box-shadow:inset 1px 1px 0 #ffb080, inset -1px -1px 0 #c84800;">Press when<br>Ignition is On</div>
<div class="btn" style="left:61px;top:565px;width:88px;height:32px;background:#9880e0;color:#e8e8f0;border:2px solid #b0b0b0;font-size:13px;line-height:27px;">Tune PID</div>
<div class="lb" style="left:156px;top:494px;font-size:13px;color:#000;font-weight:bold;">Dyno Mode</div>
<div class="hb" style="left:228px;top:496px">#</div>
<div style="left:155px;top:509.5px;width:41px;height:24px;background:#d8d8d8;border-style:solid;border-width:1px 2px 2px 1px;border-color:#f4f4f4 #8c8c8c #8c8c8c #f4f4f4;box-shadow:inset -1px -1px 0 #b4b4b4, inset 1px 1px 0 #e8e8e8;font-size:13px;line-height:19px;padding-left:3.5px">D<svg class="abs" style="left:18px;top:8.5px" width="16" height="10"><path d="M1 1H15L8 9Z" fill="#d4d4d4" stroke="#777" stroke-width="1"/></svg></div>
<div class="lb" style="left:268px;top:496px;font-size:13px;color:#000;font-weight:bold;">Dyno Setpoint</div>
<div class="hb" style="left:479px;top:496px">#</div>
<svg class="abs" style="left:198px;top:500px" width="300" height="50" viewBox="198 500 300 50"><rect x="205" y="512.5" width="286.5" height="7" rx="3.5" fill="#686c8c"/><line x1="209.3" y1="523.3" x2="209.3" y2="528.7" stroke="#000" stroke-width="1.1"/><line x1="216.3" y1="523.3" x2="216.3" y2="527" stroke="#000" stroke-width="1.1"/><line x1="223.2" y1="523.3" x2="223.2" y2="527" stroke="#000" stroke-width="1.1"/><line x1="230.2" y1="523.3" x2="230.2" y2="527" stroke="#000" stroke-width="1.1"/><line x1="237.2" y1="523.3" x2="237.2" y2="527" stroke="#000" stroke-width="1.1"/><line x1="244.1" y1="523.3" x2="244.1" y2="527" stroke="#000" stroke-width="1.1"/><line x1="251.1" y1="523.3" x2="251.1" y2="527" stroke="#000" stroke-width="1.1"/><line x1="258.0" y1="523.3" x2="258.0" y2="527" stroke="#000" stroke-width="1.1"/><line x1="265.0" y1="523.3" x2="265.0" y2="527" stroke="#000" stroke-width="1.1"/><line x1="272.0" y1="523.3" x2="272.0" y2="527" stroke="#000" stroke-width="1.1"/><line x1="278.9" y1="523.3" x2="278.9" y2="528.7" stroke="#000" stroke-width="1.1"/><line x1="285.9" y1="523.3" x2="285.9" y2="527" stroke="#000" stroke-width="1.1"/><line x1="292.9" y1="523.3" x2="292.9" y2="527" stroke="#000" stroke-width="1.1"/><line x1="299.8" y1="523.3" x2="299.8" y2="527" stroke="#000" stroke-width="1.1"/><line x1="306.8" y1="523.3" x2="306.8" y2="527" stroke="#000" stroke-width="1.1"/><line x1="313.7" y1="523.3" x2="313.7" y2="527" stroke="#000" stroke-width="1.1"/><line x1="320.7" y1="523.3" x2="320.7" y2="527" stroke="#000" stroke-width="1.1"/><line x1="327.7" y1="523.3" x2="327.7" y2="527" stroke="#000" stroke-width="1.1"/><line x1="334.6" y1="523.3" x2="334.6" y2="527" stroke="#000" stroke-width="1.1"/><line x1="341.6" y1="523.3" x2="341.6" y2="527" stroke="#000" stroke-width="1.1"/><line x1="348.6" y1="523.3" x2="348.6" y2="528.7" stroke="#000" stroke-width="1.1"/><line x1="355.5" y1="523.3" x2="355.5" y2="527" stroke="#000" stroke-width="1.1"/><line x1="362.5" y1="523.3" x2="362.5" y2="527" stroke="#000" stroke-width="1.1"/><line x1="369.4" y1="523.3" x2="369.4" y2="527" stroke="#000" stroke-width="1.1"/><line x1="376.4" y1="523.3" x2="376.4" y2="527" stroke="#000" stroke-width="1.1"/><line x1="383.4" y1="523.3" x2="383.4" y2="527" stroke="#000" stroke-width="1.1"/><line x1="390.3" y1="523.3" x2="390.3" y2="527" stroke="#000" stroke-width="1.1"/><line x1="397.3" y1="523.3" x2="397.3" y2="527" stroke="#000" stroke-width="1.1"/><line x1="404.2" y1="523.3" x2="404.2" y2="527" stroke="#000" stroke-width="1.1"/><line x1="411.2" y1="523.3" x2="411.2" y2="527" stroke="#000" stroke-width="1.1"/><line x1="418.2" y1="523.3" x2="418.2" y2="528.7" stroke="#000" stroke-width="1.1"/><line x1="425.1" y1="523.3" x2="425.1" y2="527" stroke="#000" stroke-width="1.1"/><line x1="432.1" y1="523.3" x2="432.1" y2="527" stroke="#000" stroke-width="1.1"/><line x1="439.1" y1="523.3" x2="439.1" y2="527" stroke="#000" stroke-width="1.1"/><line x1="446.0" y1="523.3" x2="446.0" y2="527" stroke="#000" stroke-width="1.1"/><line x1="453.0" y1="523.3" x2="453.0" y2="527" stroke="#000" stroke-width="1.1"/><line x1="460.0" y1="523.3" x2="460.0" y2="527" stroke="#000" stroke-width="1.1"/><line x1="466.9" y1="523.3" x2="466.9" y2="527" stroke="#000" stroke-width="1.1"/><line x1="473.9" y1="523.3" x2="473.9" y2="527" stroke="#000" stroke-width="1.1"/><line x1="480.8" y1="523.3" x2="480.8" y2="527" stroke="#000" stroke-width="1.1"/><line x1="487.8" y1="523.3" x2="487.8" y2="528.7" stroke="#000" stroke-width="1.1"/><text x="209.3" y="541.6" text-anchor="middle" style="font-family:'Liberation Sans',sans-serif;font-size:12px">0</text><text x="278.9" y="541.6" text-anchor="middle" style="font-family:'Liberation Sans',sans-serif;font-size:12px">25</text><text x="348.6" y="541.6" text-anchor="middle" style="font-family:'Liberation Sans',sans-serif;font-size:12px">50</text><text x="418.2" y="541.6" text-anchor="middle" style="font-family:'Liberation Sans',sans-serif;font-size:12px">75</text><text x="487.8" y="541.6" text-anchor="middle" style="font-family:'Liberation Sans',sans-serif;font-size:12px">100</text><path d="M204.3 514.5 Q205 519 210 519.3" fill="none" stroke="#1040e0" stroke-width="1.3"/><path d="M203.3 510.5 C203.3 503.5 215.7 503.5 215.7 510.5 C215.7 514 211.5 516.5 209.6 519.6 C208 516.5 203.3 514 203.3 510.5Z" fill="#fff"/></svg>
<svg class="abs" style="left:501px;top:492.5px" width="34" height="55" viewBox="0 0 34 55"><ellipse cx="17" cy="27.5" rx="16" ry="26.5" fill="url(#spin)"/><ellipse cx="17" cy="27.5" rx="15.3" ry="25.8" fill="none" stroke="url(#spinedge)" stroke-width="1.6"/><line x1="2" y1="27" x2="32" y2="27" stroke="#8c8c8c"/><line x1="2" y1="28" x2="32" y2="28" stroke="#f4f4f4"/><path d="M17 9L9.5 23H17Z" fill="#8e8e8e"/><path d="M17 9L24.5 23H17Z" fill="#e2e2e2"/><path d="M9.5 23H24.5" stroke="#f0f0f0" stroke-width="1.2"/><path d="M17 46L9.5 32H17Z" fill="#9a9a9a"/><path d="M17 46L24.5 32H17Z" fill="#dedede"/><path d="M9.5 32H24.5" stroke="#7c7c7c" stroke-width="1.2"/></svg>
<div class="hb" style="left:558px;top:494px">#</div>
<div style="left:536px;top:509px;width:56px;height:24px;border-style:solid;border-width:3px 5px 3px 3px;border-color:#b0b0b0 #ececec #ececec #b0b0b0;background:#0a40e0;color:#fff;font-size:12.5px;line-height:18px;padding-left:2px">0.0</div>
<div class="btn" style="left:592px;top:497.5px;width:41.5px;height:99.5px;background:#80e488;color:#8c8890;border:1px solid #a8a8a8;font-size:12.8px;line-height:15px;padding-top:44px;box-shadow:inset 2px 2px 0 #e0e0e0, inset -1px -1px 0 #b0b0b0;">Log<br>Now</div>
<div class="btn" style="left:635px;top:497px;width:78px;height:34px;background:#20c820;color:#000;border:1px solid #202020;font-size:13px;line-height:32px;box-shadow:inset 2px 2px 0 #60e060, inset -2px -2px 0 #108010;">Pause</div>
<div class="btn" style="left:635px;top:534px;width:78px;height:33px;background:#ff0000;color:#fff;border:1px solid #202020;font-size:13px;line-height:31px;box-shadow:inset 2px 2px 0 #ff7070, inset -2px -2px 0 #a00000;">ABORT</div>
<div class="btn" style="left:634px;top:570px;width:79px;height:27px;background:#c0c0c0;color:#000;border:1px solid #000;font-size:13px;line-height:27px;box-shadow:inset 1px 1px 0 #ececec, inset -1px -2px 0 #888;">Help&lt;F12&gt;</div>
<div class="btn" style="left:716px;top:497px;width:80px;height:22px;background:#4a1cff;color:#fff;border:1px solid #202020;font-size:13px;line-height:18px;box-shadow:inset 2px 2px 0 #8068ff, inset -2px -2px 0 #2808b0;">Print</div>
<svg class="abs" style="left:722px;top:519px" width="72" height="44" viewBox="0 0 72 44"><ellipse cx="36" cy="22" rx="34.5" ry="21.5" fill="url(#ledring)"/><ellipse cx="36" cy="22" rx="34.5" ry="21.5" fill="url(#ledfade)"/><ellipse cx="36" cy="21.5" rx="27" ry="16.5" fill="url(#led)"/></svg>
<div class="btn" style="left:716px;top:563px;width:80px;height:34px;background:#ff0000;color:#000;border:1px solid #202020;font-size:13px;line-height:15px;padding-top:0px;box-shadow:inset 2px 2px 0 #ff7070, inset -2px -2px 0 #a00000;">Exit<br>&lt;ESC&gt;</div>
</body></html>
